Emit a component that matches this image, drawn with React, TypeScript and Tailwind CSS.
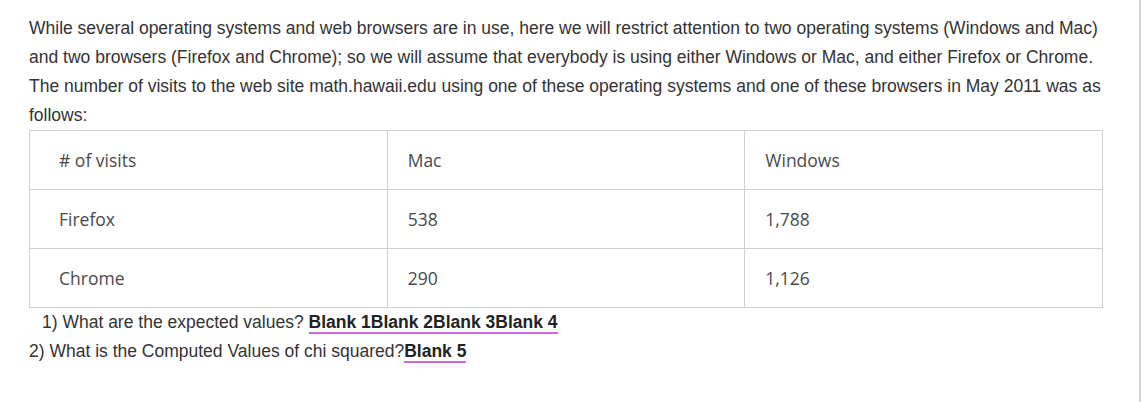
export default function App() {
  const rows = [
    ["# of visits", "Mac", "Windows"],
    ["Firefox", "538", "1,788"],
    ["Chrome", "290", "1,126"],
  ];

  return (
    <div className="h-[402px] w-[1141px] border-r-2 border-[#d4d4d4] bg-white">
      <div className="w-[1110px] pl-[29px] pt-[14px] font-['Liberation_Sans',Arial,sans-serif] text-[17.5px] leading-[29px] text-[#333]">
        <p className="whitespace-nowrap">
          While several operating systems and web browsers are in use, here we will restrict attention to two operating systems (Windows and Mac)
          <br />
          and two browsers (Firefox and Chrome); so we will assume that everybody is using either Windows or Mac, and either Firefox or Chrome.
          <br />
          The number of visits to the web site math.hawaii.edu using one of these operating systems and one of these browsers in May 2011 was as
          <br />
          follows:
        </p>

        <table className="w-[1074px] table-fixed border-collapse font-['Open_Sans',sans-serif] text-[17.5px] text-[#4a4a4a]">
          <tbody>
            {rows.map((row, i) => (
              <tr key={i} className="h-[59px]">
                {row.map((cell, j) => (
                  <td
                    key={j}
                    className={`border border-[#cfcfcf] align-middle ${j === 0 ? "pl-[29px]" : "pl-[20px]"}`}
                  >
                    {cell}
                  </td>
                ))}
              </tr>
            ))}
          </tbody>
        </table>

        <p className="pl-[13px]">
          1) What are the expected values?{" "}
          <span className="border-b-2 border-[#c86dd8] font-bold text-[#222]">Blank 1Blank 2Blank 3Blank 4</span>
        </p>
        <p>
          2) What is the Computed Values of chi squared?
          <span className="border-b-2 border-[#c86dd8] font-bold text-[#222]">Blank 5</span>
        </p>
      </div>
    </div>
  );
}
